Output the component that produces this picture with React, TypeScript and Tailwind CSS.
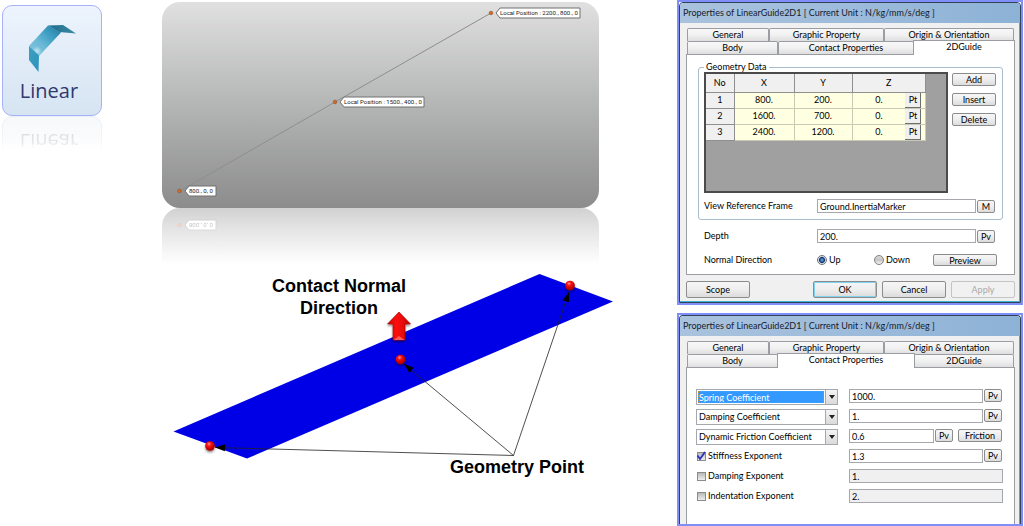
import { useState } from "react";
import type { ReactNode } from "react";
import clsx from "clsx";

const buttonLook =
  "flex shrink-0 items-center justify-center rounded-[2px] border border-[#8c8c8c] bg-linear-to-b from-[#f6f6f6] via-[#eeeeee] to-[#dcdcdc] text-[9px] leading-none text-black";
const fieldLook =
  "h-[14px] min-w-0 border border-[#a5a8ad] bg-white px-[2px] text-[9px] leading-[12px] text-black outline-none";

function LinearTile({ hidden = false }: { hidden?: boolean }) {
  return (
    <div
      aria-hidden={hidden}
      className="flex h-[111px] w-full flex-col items-center justify-between rounded-[10px] border border-[#a6b2fb] bg-linear-to-b from-[#edf4fd] to-[#d6e4f2] pt-[18px] pr-[6px] pb-[10px]"
    >
      <svg viewBox="22 24 56 50" className="h-[50px] w-[56px]" aria-hidden="true">
        <defs>
          <linearGradient id="sheet" gradientUnits="userSpaceOnUse" x1="34" y1="52" x2="57" y2="28">
            <stop offset="0" stopColor="#7cc3dc" />
            <stop offset="0.35" stopColor="#6ab9d6" />
            <stop offset="0.7" stopColor="#3f9fc4" />
            <stop offset="1" stopColor="#2a86aa" />
          </linearGradient>
          <radialGradient id="glint" gradientUnits="userSpaceOnUse" cx="38" cy="51" r="5">
            <stop offset="0" stopColor="#e2f4fa" stopOpacity="0.7" />
            <stop offset="1" stopColor="#e2f4fa" stopOpacity="0" />
          </radialGradient>
          <linearGradient id="topFold" x1="0" y1="0" x2="1" y2="0">
            <stop offset="0" stopColor="#1f6a88" />
            <stop offset="1" stopColor="#3a8ca8" />
          </linearGradient>
          <linearGradient id="endFold" x1="0" y1="0" x2="1" y2="1">
            <stop offset="0" stopColor="#3f9fc2" />
            <stop offset="1" stopColor="#2b93bb" />
          </linearGradient>
        </defs>
        <path d="M49 25.500L64 25L77 33.500L60 32Z" fill="url(#topFold)" />
        <path d="M49 25.500L62 32.500L40 56L30 46Z" fill="url(#sheet)" />
        <path d="M49 25.500L62 32.500L40 56L30 46Z" fill="url(#glint)" />
        <path d="M30 46L40 55.500L39.500 72L30 60Z" fill="url(#endFold)" />
      </svg>
      <span className="font-['Open_Sans','Noto_Sans',sans-serif] text-[20px] leading-[28px] font-medium text-[#30386e]">
        Linear
      </span>
    </div>
  );
}

function Tag({ x, y, width, text }: { x: number; y: number; width: number; text: string }) {
  return (
    <g>
      <path
        d={`M${x} ${y}l4 -5h${width - 4}v10h-${width - 4}z`}
        fill="#fff"
        stroke="#707070"
        strokeWidth="1"
      />
      <text x={x + 4} y={y + 2} fontSize="6" fill="#222">
        {text}
      </text>
    </g>
  );
}

const markers = [
  { x: 179.5, y: 191, width: 31, text: "800., 0, 0" },
  { x: 335, y: 102, width: 84, text: "Local Position : 1500., 400., 0" },
  { x: 491, y: 13, width: 84, text: "Local Position : 2200., 800., 0" },
];

function PathView({ hidden = false }: { hidden?: boolean }) {
  return (
    <div
      aria-hidden={hidden}
      className="rounded-[18px] bg-linear-to-b from-[#e0e0e0] via-[#b4b6b5] to-[#8b8c8b]"
    >
      <svg
        viewBox="162 2 437 206"
        className="block w-full font-['Roboto',sans-serif]"
        role="img"
        aria-label="Guide path"
      >
        <path d="M180 191L335 102L491 13" stroke="#8e8e8e" strokeWidth="1" fill="none" />
        {markers.slice(0, hidden ? 1 : 3).map(({ x, y, width, text }) => (
          <g key={x}>
            <Tag x={Math.round(x) + 5} y={y} width={width} text={text} />
            <circle cx={x} cy={y} r="1.800" fill="#e0661c" stroke="#8a5a3a" strokeWidth="0.700" />
          </g>
        ))}
      </svg>
    </div>
  );
}

function PlaneView() {
  return (
    <svg
      viewBox="162 265 455 220"
      className="block w-full font-['Liberation_Sans',sans-serif]"
      role="img"
      aria-label="Contact plane with geometry points"
    >
      <defs>
        <radialGradient id="ball" cx="0.4" cy="0.3" r="0.7">
          <stop offset="0" stopColor="#ff8f8f" />
          <stop offset="0.35" stopColor="#f50a0a" />
          <stop offset="1" stopColor="#a30000" />
        </radialGradient>
        <linearGradient id="arrow" x1="0" y1="0" x2="1" y2="0">
          <stop offset="0" stopColor="#c80000" />
          <stop offset="0.4" stopColor="#ff1010" />
          <stop offset="1" stopColor="#c00000" />
        </linearGradient>
        <marker
          id="head"
          viewBox="0 0 10 8"
          refX="10"
          refY="4"
          markerWidth="10"
          markerHeight="8"
          markerUnits="userSpaceOnUse"
          orient="auto"
        >
          <path d="M0 0.500L10 4L0 7.500Z" fill="#000" />
        </marker>
        <filter id="soft" x="-50%" y="-50%" width="200%" height="200%">
          <feDropShadow dx="0" dy="1.500" stdDeviation="1.200" floodColor="#000" floodOpacity="0.5" />
        </filter>
      </defs>
      <path d="M173.500 431.500L539.500 274L613 301.500L247 458.500Z" fill="#0000e6" />
      <g stroke="#222" strokeWidth="0.800" fill="none">
        <path d="M513.500 455.500L215 447.500" markerEnd="url(#head)" />
        <path d="M513.500 455.500L404 364" markerEnd="url(#head)" />
        <path d="M513.500 455.500L569 292" markerEnd="url(#head)" />
      </g>
      <g filter="url(#soft)">
        <path
          d="M399 312L410.500 324H405V340H393V324H387.500Z"
          fill="url(#arrow)"
          stroke="#a80000"
          strokeWidth="0.600"
        />
        <path d="M393.500 340L399 336L404.500 340Z" fill="#ff5a5a" />
        <circle cx="210" cy="446" r="4.800" fill="url(#ball)" />
        <circle cx="400.500" cy="359.500" r="4.800" fill="url(#ball)" />
        <circle cx="570" cy="285.500" r="4.800" fill="url(#ball)" />
      </g>
      <g fontSize="18" fontWeight="700" textAnchor="middle" fill="#000">
        <text x="339" y="292">
          Contact Normal
        </text>
        <text x="339" y="314">
          Direction
        </text>
        <text x="517" y="473">
          Geometry Point
        </text>
      </g>
    </svg>
  );
}

function Tab({ label, active = false }: { label: string; active?: boolean }) {
  return (
    <button
      type="button"
      role="tab"
      aria-selected={active}
      className={clsx(
        "flex justify-center border-x border-t border-[#9a9ea3] text-[9px] leading-[12px]",
        active
          ? "relative -mx-px -mt-px -mb-px h-[15px] items-start bg-white"
          : "h-[13px] items-center rounded-t-[2px] bg-linear-to-b from-[#f8f8f8] via-[#f1f1f1] to-[#dedede]",
      )}
    >
      {label}
    </button>
  );
}

function Dialog({ active, last = false, children, footer }: {
  active: string;
  last?: boolean;
  children: ReactNode;
  footer?: ReactNode;
}) {
  return (
    <section
      aria-label="Properties of LinearGuide2D1"
      className={clsx("border-2 border-[#7f8ef8]", last && "flex grow flex-col")}
    >
      <div
        className={clsx(
          "rounded-t-[4px] border-x border-t border-[#2f4257] bg-[#f0f0f0]",
          last ? "flex grow flex-col" : "border-b",
        )}
      >
        <h2 className="h-[20px] rounded-t-[3px] bg-linear-to-r from-[#a9c2dd] via-[#9dbbdb] to-[#8cb2d6] pl-[3px] text-[9px] leading-[20px] font-normal text-[#16202c]">
          Properties of LinearGuide2D1 [ Current Unit : N/kg/mm/s/deg ]
        </h2>
        <div
          className={clsx(
            "border-r border-[#3fb3cf] pt-[5px] pr-[4px] pl-[6px]",
            last ? "flex grow flex-col" : "border-b pb-[3px]",
          )}
        >
          <div role="tablist" className="px-px">
            <div className="grid grid-cols-[82fr_115fr_130fr]">
              <Tab label="General" />
              <Tab label="Graphic Property" />
              <Tab label="Origin & Orientation" />
            </div>
            <div className="grid grid-cols-[91fr_136fr_100fr]">
              {["Body", "Contact Properties", "2DGuide"].map((label) => (
                <Tab key={label} label={label} active={label === active} />
              ))}
            </div>
          </div>
          <div
            className={clsx(
              "border-x border-t border-[#9a9ea3] bg-white",
              last ? "grow" : "border-b",
            )}
          >
            {children}
          </div>
          {footer}
        </div>
      </div>
    </section>
  );
}

const points = [
  ["800.", "200.", "0."],
  ["1600.", "700.", "0."],
  ["2400.", "1200.", "0."],
];

function GuideDialog() {
  const [direction, setDirection] = useState("Up");
  return (
    <Dialog
      active="2DGuide"
      footer={
        <div className="mt-[6px] flex gap-[5px]">
          <button type="button" className={clsx(buttonLook, "mr-auto h-[17px] w-[64px]")}>Scope</button>
          <button type="button" className={clsx(buttonLook, "h-[17px] w-[64px] border-[#3c9cc4] inset-ring inset-ring-[#7fd3ee]")}>OK</button>
          <button type="button" className={clsx(buttonLook, "h-[17px] w-[64px]")}>Cancel</button>
          <button type="button" disabled className="flex h-[17px] w-[64px] items-center justify-center rounded-[2px] border border-[#c4c4c4] bg-[#f1f1f1] text-[9px] leading-none text-[#a9a9a9]">Apply</button>
        </div>
      }
    >
      <div className="px-[11px] pt-[6px] pb-[7px]">
        <fieldset className="min-w-0 rounded-[3px] border border-[#a9bccb] px-[5px] pb-[6px]">
          <legend className="px-[2px] text-[9px] leading-[12px]">Geometry Data</legend>
          <div className="-mt-px flex items-start gap-[4px]">
            <div className="h-[121px] min-w-0 grow border-2 border-[#4b4b4b] bg-[#a0a0a0] pr-[20px]">
              <table className="w-full table-fixed border-collapse text-center text-[9px] leading-[12px]">
                <colgroup>
                  <col className="w-[28px]" />
                  <col className="w-[60px]" />
                  <col className="w-[58px]" />
                  <col />
                  <col className="w-[20px]" />
                </colgroup>
                <thead>
                  <tr className="h-[18px] bg-[#f0f0f0]">
                    <th className="border-r border-b border-[#8f8f8f] p-0 font-normal">No</th>
                    <th className="border-r border-b border-[#8f8f8f] p-0 font-normal">X</th>
                    <th className="border-r border-b border-[#8f8f8f] p-0 font-normal">Y</th>
                    <th colSpan={2} className="border-r border-b border-[#8f8f8f] p-0 font-normal">Z</th>
                  </tr>
                </thead>
                <tbody>
                  {points.map(([x, y, z], index) => (
                    <tr key={x} className="h-[16px] bg-[#ffffe1]">
                      <th className="border-r border-b border-[#8f8f8f] bg-[#f0f0f0] p-0 font-normal">{index + 1}</th>
                      <td className="border-r border-b border-[#c9c9b4] p-0">{x}</td>
                      <td className="border-r border-b border-[#c9c9b4] p-0">{y}</td>
                      <td className="border-b border-[#c9c9b4] p-0">{z}</td>
                      <td className="border-r border-b border-[#c9c9b4] p-0">
                        <button type="button" className="block h-[15px] w-[16px] border-r border-b border-[#6f6f6f] bg-[#f0f0f0] text-[9px] leading-[14px]">Pt</button>
                      </td>
                    </tr>
                  ))}
                </tbody>
              </table>
            </div>
            <div className="mr-px flex w-[44px] shrink-0 flex-col gap-[7px] pt-px">
              <button type="button" className={clsx(buttonLook, "h-[13px]")}>Add</button>
              <button type="button" className={clsx(buttonLook, "h-[13px]")}>Insert</button>
              <button type="button" className={clsx(buttonLook, "h-[13px]")}>Delete</button>
            </div>
          </div>
          <div className="mt-[6px] flex items-center">
            <label htmlFor="frame" className="w-[113px] shrink-0 text-[9px] leading-[12px]">View Reference Frame</label>
            <input id="frame" defaultValue="Ground.InertiaMarker" className={clsx(fieldLook, "grow")} />
            <button type="button" className={clsx(buttonLook, "mr-[2px] ml-px h-[13px] w-[18px]")}>M</button>
          </div>
        </fieldset>
        <div className="mt-[9px] flex items-center pr-[8px] pl-[6px]">
          <label htmlFor="depth" className="w-[113px] shrink-0 text-[9px] leading-[12px]">Depth</label>
          <input id="depth" defaultValue="200." className={clsx(fieldLook, "grow")} />
          <button type="button" className={clsx(buttonLook, "ml-px h-[13px] w-[18px]")}>Pv</button>
        </div>
        <div role="radiogroup" aria-label="Normal Direction" className="mt-[10px] flex items-center pr-[6px] pl-[6px]">
          <span className="w-[113px] shrink-0 text-[9px] leading-[12px]">Normal Direction</span>
          {["Up", "Down"].map((name) => (
            <label key={name} className="flex w-[57px] items-center gap-[2px] text-[9px] leading-[14px]">
              <input
                type="radio"
                name="direction"
                checked={direction === name}
                onChange={() => setDirection(name)}
                className="size-[10px] appearance-none rounded-full border border-[#808080] bg-linear-to-b from-[#dcdcdc] via-[#c4c4c4] to-[#f8f8f8] checked:border-[#6d7580] checked:bg-[radial-gradient(circle,#6fb4ee_0,#12366c_45%,#e4e9ef_65%)]"
              />
              {name}
            </label>
          ))}
          <button type="button" className={clsx(buttonLook, "ml-auto h-[12px] w-[64px]")}>Preview</button>
        </div>
      </div>
    </Dialog>
  );
}

function Coefficient({ name, value, selected = false, friction = false }: {
  name: string;
  value: string;
  selected?: boolean;
  friction?: boolean;
}) {
  return (
    <div className="flex h-[20px] items-start">
      <div className="mr-[11px] flex h-[16px] w-[142px] shrink-0 items-stretch border border-[#a5a8ad] bg-white">
        <select
          aria-label={name}
          className={clsx(
            "m-px min-w-0 grow appearance-none text-[9px] leading-[12px] outline-none",
            selected ? "border border-dotted border-[#c98a3a] bg-[#3399ff] text-white" : "pl-px",
          )}
        >
          <option>{name}</option>
        </select>
        <span className="pointer-events-none flex w-[12px] shrink-0 items-center justify-center border-l border-[#a5a8ad] bg-linear-to-b from-[#f4f4f4] to-[#dadada]">
          <svg viewBox="0 0 6 4" className="h-[4px] w-[6px]" aria-hidden="true">
            <path d="M0 0H6L3 4Z" fill="#222" />
          </svg>
        </span>
      </div>
      <input aria-label={`${name} value`} defaultValue={value} className={clsx(fieldLook, "grow")} />
      <button type="button" className={clsx(buttonLook, "mr-px ml-px h-[13px] w-[18px]")}>Pv</button>
      {friction && (
        <button type="button" className={clsx(buttonLook, "mr-px ml-[4px] h-[13px] w-[44px]")}>Friction</button>
      )}
    </div>
  );
}

function Exponent({ name, value }: { name: string; value: string }) {
  const [on, setOn] = useState(name === "Stiffness Exponent");
  return (
    <div className="flex h-[20px] items-start">
      <label className="mr-[11px] flex h-[14px] w-[142px] shrink-0 items-center gap-[2px] text-[9px] leading-[12px]">
        <span className="grid size-[10px] place-items-center">
          <input
            type="checkbox"
            checked={on}
            onChange={() => setOn(!on)}
            className="col-start-1 row-start-1 size-[9px] appearance-none border border-[#8b8b8b] bg-linear-to-b from-[#b9b9b9] to-[#eeeeee]"
          />
          {on && (
            <svg viewBox="0 0 10 10" className="pointer-events-none col-start-1 row-start-1 size-[10px]" aria-hidden="true">
              <path d="M1.500 4.500L4 8L9 1" fill="none" stroke="#2a32b8" strokeWidth="1.800" />
            </svg>
          )}
        </span>
        {name}
      </label>
      <input
        aria-label={`${name} value`}
        defaultValue={value}
        disabled={!on}
        className={clsx(fieldLook, "grow disabled:bg-[#f0f0f0]")}
      />
      {on && <button type="button" className={clsx(buttonLook, "mr-px ml-px h-[13px] w-[18px]")}>Pv</button>}
    </div>
  );
}

function ContactDialog() {
  return (
    <Dialog active="Contact Properties" last>
      <div className="pt-[21px] pr-[11px] pl-[9px]">
        <Coefficient name="Spring Coefficient" value="1000." selected />
        <Coefficient name="Damping Coefficient" value="1." />
        <Coefficient name="Dynamic Friction Coefficient" value="0.6" friction />
        <Exponent name="Stiffness Exponent" value="1.3" />
        <Exponent name="Damping Exponent" value="1." />
        <Exponent name="Indentation Exponent" value="2." />
      </div>
    </Dialog>
  );
}

export default function App() {
  return (
    <main className="grid min-h-screen grid-cols-[100px_minmax(0,1fr)_346px] gap-x-[60px] bg-white pr-px pl-[2px] font-['Lato','Noto_Sans',sans-serif] text-black">
      <div className="pt-[5px]">
        <LinearTile />
        <div className="h-[44px] overflow-hidden opacity-80 grayscale-50 [mask-image:linear-gradient(to_bottom,rgba(0,0,0,0.3),rgba(0,0,0,0.15)_60%,transparent_76%)]">
          <div className="-scale-y-100">
            <LinearTile hidden />
          </div>
        </div>
      </div>
      <div className="pt-[2px]">
        <div className="mr-[18px]">
          <PathView />
          <div className="h-[57px] overflow-hidden [mask-image:linear-gradient(to_bottom,rgba(0,0,0,0.4),transparent)]">
            <div className="-scale-y-100">
              <PathView hidden />
            </div>
          </div>
        </div>
        <PlaneView />
      </div>
      <div className="flex flex-col gap-[8px]">
        <GuideDialog />
        <ContactDialog />
      </div>
    </main>
  );
}
